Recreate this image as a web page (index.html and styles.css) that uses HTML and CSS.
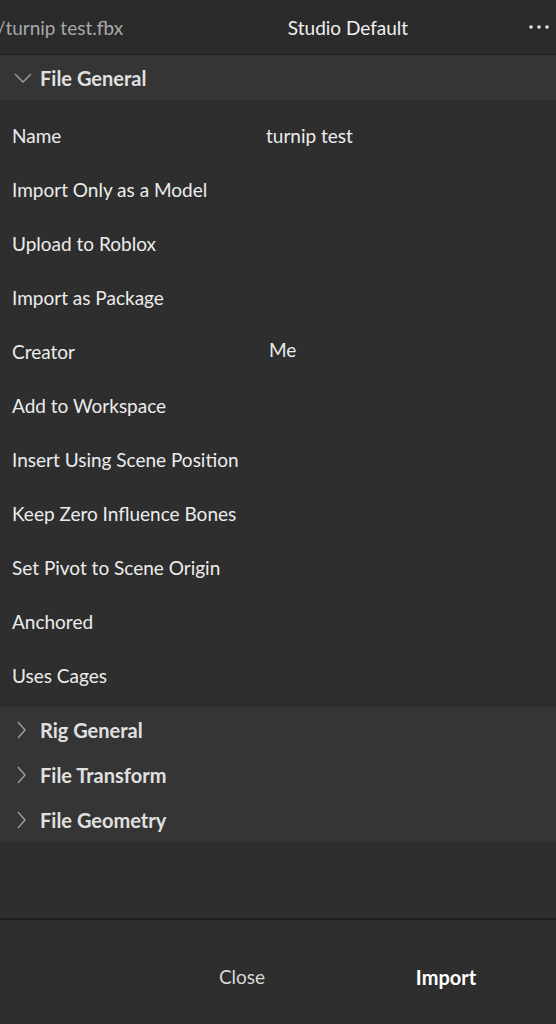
FILE: index.html
```html
<!DOCTYPE html>
<html lang="en">
  <head>
    <meta charset="UTF-8" />
    <meta name="viewport" content="width=device-width, initial-scale=1.0" />
    <title>Import Preview</title>
    <link rel="stylesheet" href="styles.css">
  </head>

  <body>
    <div class="dialog">
      <!-- top bar -->
      <div class="topbar">
        <span class="file-path">/turnip test.fbx</span>
        <span class="preset">Studio Default</span>
        <span class="more">
          <svg width="22" height="6" viewBox="0 0 22 6">
            <circle cx="3" cy="3" r="1.8" fill="#e6e6e6" />
            <circle cx="11" cy="3" r="1.8" fill="#e6e6e6" />
            <circle cx="19" cy="3" r="1.8" fill="#e6e6e6" />
          </svg>
        </span>
      </div>

      <div class="content">
        <!-- expanded section -->
        <div class="section">
          <div class="section-head">
            <svg class="chev" width="18" height="10" viewBox="0 0 18 10">
              <path d="M1 1 L9 9 L17 1" fill="none" stroke="#9a9a9a" stroke-width="1.5" />
            </svg>
            <span>File General</span>
          </div>
        </div>

        <ul class="props">
          <li><span class="label">Name</span><span class="value">turnip test</span></li>
          <li><span class="label">Import Only as a Model</span></li>
          <li><span class="label">Upload to Roblox</span></li>
          <li><span class="label">Import as Package</span></li>
          <li><span class="label">Creator</span><span class="value value-me">Me</span></li>
          <li><span class="label">Add to Workspace</span></li>
          <li><span class="label">Insert Using Scene Position</span></li>
          <li><span class="label">Keep Zero Influence Bones</span></li>
          <li><span class="label">Set Pivot to Scene Origin</span></li>
          <li><span class="label">Anchored</span></li>
          <li><span class="label">Uses Cages</span></li>
        </ul>

        <!-- collapsed sections -->
        <div class="section">
          <div class="section-head">
            <svg class="chev chev-right" width="10" height="18" viewBox="0 0 10 18">
              <path d="M1 1 L8 9 L1 17" fill="none" stroke="#9a9a9a" stroke-width="1.5" />
            </svg>
            <span>Rig General</span>
          </div>
          <div class="section-head">
            <svg class="chev chev-right" width="10" height="18" viewBox="0 0 10 18">
              <path d="M1 1 L8 9 L1 17" fill="none" stroke="#9a9a9a" stroke-width="1.5" />
            </svg>
            <span>File Transform</span>
          </div>
          <div class="section-head">
            <svg class="chev chev-right" width="10" height="18" viewBox="0 0 10 18">
              <path d="M1 1 L8 9 L1 17" fill="none" stroke="#9a9a9a" stroke-width="1.5" />
            </svg>
            <span>File Geometry</span>
          </div>
        </div>
      </div>

      <!-- footer buttons -->
      <div class="footer">
        <span class="btn btn-close">Close</span>
        <span class="btn btn-import">Import</span>
      </div>
    </div>
  </body>
</html>
```

FILE: styles.css
```css
* {
  margin: 0px;
  padding: 0px;
  box-sizing: border-box;
}

li {
  list-style: none;
}

body {
  background-color: #2e2e2e;
  font-family: Lato, "Liberation Sans", sans-serif;
  color: #e8e8e8;
}

.dialog {
  width: 556px;
  height: 1024px;
  display: flex;
  flex-direction: column;
  overflow: hidden;
}

/* top bar */
.topbar {
  height: 55px;
  display: flex;
  align-items: center;
  background-color: #2b2b2b;
  border-bottom: 1px solid #1f1f1f;
  font-size: 19px;
  flex-shrink: 0;
}

.file-path {
  width: 250px;
  margin-left: -3px;
  color: #a8a8a8;
  white-space: nowrap;
}

.preset {
  flex: 1;
  text-align: center;
  margin-left: -79px;
  color: #f0f0f0;
}

.more {
  width: 28px;
  display: flex;
  align-items: center;
}

.content {
  flex: 1;
}

/* section headers */
.section {
  background-color: #353535;
}

.section-head {
  height: 45px;
  display: flex;
  align-items: center;
  font-size: 20px;
  font-weight: 700;
  color: #e0e0e0;
}

.chev {
  margin-left: 14px;
  margin-right: 8px;
}

.chev-right {
  margin-left: 17px;
  margin-right: 13px;
}

/* property rows */
.props {
  padding-top: 8px;
  padding-bottom: 5px;
}

.props li {
  height: 54px;
  display: flex;
  align-items: center;
  font-size: 19px;
  color: #ececec;
}

.label {
  width: 266px;
  padding-left: 12px;
}

.value-me {
  padding-left: 3px;
  margin-top: -4px;
}

/* footer */
.footer {
  height: 106px;
  flex-shrink: 0;
  display: flex;
  align-items: center;
  padding-top: 9px;
  border-top: 2px solid #1f1f1f;
  font-size: 19px;
}

.btn {
  width: 204px;
  text-align: center;
}

.btn-close {
  margin-left: 140px;
  color: #d8d8d8;
}

.btn-import {
  font-size: 20px;
  font-weight: 700;
  color: #ffffff;
}
```
